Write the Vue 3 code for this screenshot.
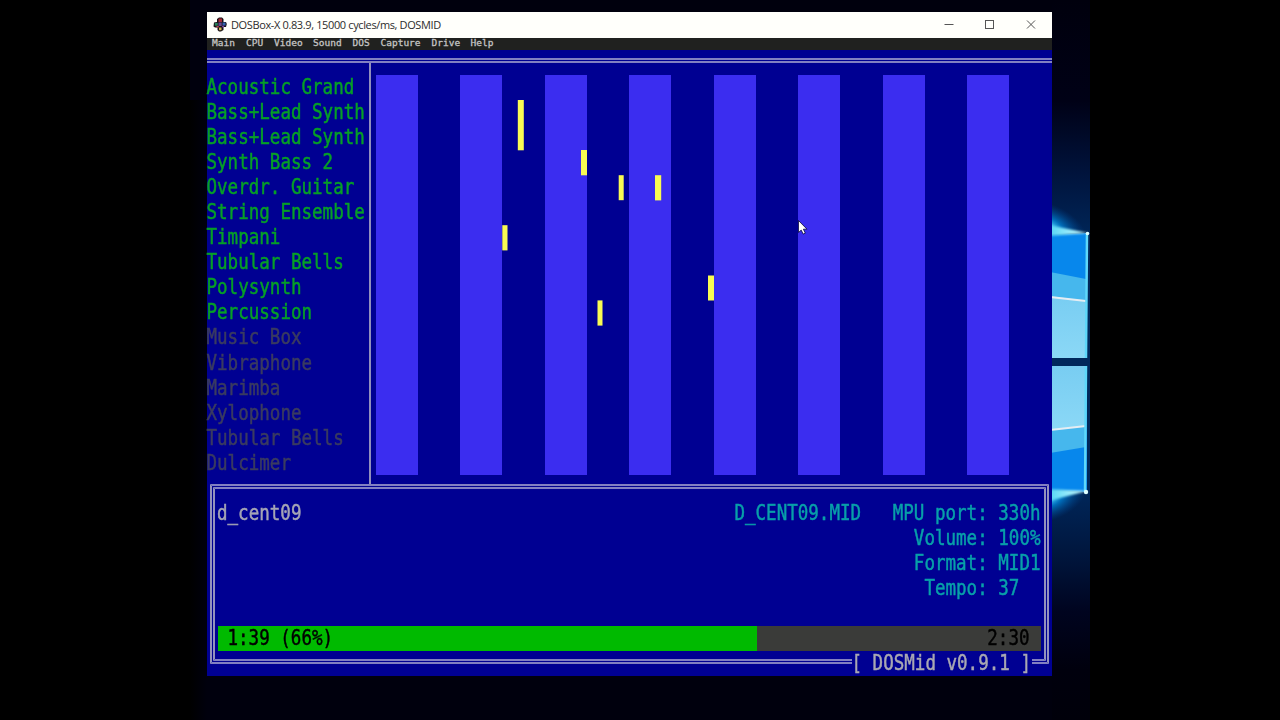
<script setup>
const channels = [
  'Acoustic Grand', 'Bass+Lead Synth', 'Bass+Lead Synth', 'Synth Bass 2',
  'Overdr. Guitar', 'String Ensemble', 'Timpani', 'Tubular Bells',
  'Polysynth', 'Percussion', 'Music Box', 'Vibraphone', 'Marimba',
  'Xylophone', 'Tubular Bells', 'Dulcimer'
]
const activeCount = 10
const menu = [
  { t: 'Main', w: 34 }, { t: 'CPU', w: 28 }, { t: 'Video', w: 39 }, { t: 'Sound', w: 39.5 },
  { t: 'DOS', w: 28 }, { t: 'Capture', w: 51 }, { t: 'Drive', w: 39 }, { t: 'Help', w: 34 }
]
const notes = [
  { x: 517.8, y: 100, w: 6, h: 50.3 },
  { x: 581, y: 150, w: 6, h: 25.3 },
  { x: 618.7, y: 175.2, w: 5, h: 25 },
  { x: 655, y: 175.2, w: 6.2, h: 25.2 },
  { x: 502.3, y: 225.2, w: 5.2, h: 25.2 },
  { x: 708, y: 275.5, w: 6, h: 25 },
  { x: 597.5, y: 300.4, w: 5, h: 25.2 }
]
const info = ['D_CENT09.MID   MPU port: 330h', 'Volume: 100%', 'Format: MID1', 'Tempo: 37  ']
</script>

<template>
  <div class="screen">
    <svg class="wall" width="1280" height="720" viewBox="0 0 1280 720">
      <defs>
        <linearGradient id="glow" x1="0" y1="0" x2="0" y2="1">
          <stop offset="0" stop-color="#00000d" />
          <stop offset="0.14" stop-color="#000116" />
          <stop offset="0.24" stop-color="#00133c" />
          <stop offset="0.32" stop-color="#002455" />
          <stop offset="0.5" stop-color="#00285c" />
          <stop offset="0.69" stop-color="#002557" />
          <stop offset="0.78" stop-color="#00143a" />
          <stop offset="0.85" stop-color="#00041f" />
          <stop offset="0.93" stop-color="#00000d" />
          <stop offset="1" stop-color="#00000a" />
        </linearGradient>
        <linearGradient id="edge"><stop offset="0" stop-color="#000" /><stop offset="1" stop-color="#00000d" /></linearGradient>
        <radialGradient id="flare"><stop offset="0" stop-color="#4fd4ff" /><stop offset="0.35" stop-color="#0086dc" stop-opacity="0.75" /><stop offset="1" stop-color="#004a9c" stop-opacity="0" /></radialGradient>
        <linearGradient id="pane" x1="0" y1="0" x2="0" y2="1"><stop offset="0" stop-color="#78cdf2" /><stop offset="1" stop-color="#8bd8f6" /></linearGradient>
        <linearGradient id="rayfill"><stop offset="0" stop-color="#4fd4f5" /><stop offset="1" stop-color="#d8ffff" /></linearGradient>
        <filter id="soft" x="-20%" y="-60%" width="140%" height="220%"><feGaussianBlur stdDeviation="0.9" /></filter>
        <clipPath id="wallclip"><rect x="190" y="0" width="900" height="720" /></clipPath>
      </defs>
      <rect width="1280" height="720" fill="#000" />
      <g clip-path="url(#wallclip)">
        <rect x="190" width="900" height="720" fill="#00000d" />
        <rect x="190" y="100" width="17" height="620" fill="url(#edge)" />
        <rect x="1052" y="0" width="38" height="720" fill="url(#glow)" />
        <ellipse cx="1050" cy="226" rx="38" ry="21" fill="url(#flare)" transform="rotate(24 1050 226)" />
        <ellipse cx="1050" cy="499" rx="38" ry="21" fill="url(#flare)" transform="rotate(-22 1050 499)" />
        <path d="M1050 235 L1087 233 V358 H1050Z" fill="#0787ec" />
        <path d="M1050 272 L1086 279 V358 H1050Z" fill="#46b7ed" />
        <path d="M1050 296 L1086 301 V358 H1050Z" fill="url(#pane)" />
        <path d="M1050 297 L1086 301" stroke="#e5edf3" stroke-width="2" />
        <path d="M1050 366 H1087 V492 L1050 490Z" fill="#0787ec" />
        <path d="M1050 366 H1086 V447 L1050 453Z" fill="#46b7ed" />
        <path d="M1050 366 H1086 V426 L1050 430Z" fill="url(#pane)" />
        <path d="M1050 430 L1086 426" stroke="#e5edf3" stroke-width="2" />
        <path d="M1087 233 L1086 358 M1086 366 L1085 492" stroke="#5ed7fa" stroke-width="2.5" />
        <path d="M1048 225 L1088 233 L1048 236Z M1048 501 L1087 491 L1048 489Z" fill="url(#rayfill)" filter="url(#soft)" />
        <circle cx="1087.5" cy="233.5" r="1.8" fill="#dfffff" /><circle cx="1086" cy="492" r="2.2" fill="#dfffff" />
      </g>
    </svg>

    <div class="window">
      <header class="titlebar">
        <svg class="logo" width="14" height="16" viewBox="0 0 14 16">
          <path d="M4 2l2-1.500h3L10.500 2v3L13 5l.8 2-.8 3h-2.500v3L8 14.500H6L4.500 13v-2.500H2L.5 9.500 1 5.500 4 5Z" fill="#171117" />
          <path d="M5.500 1.500h3.500V5H5.500Z" fill="#a52b36" /><path d="M1.800 6h3v2.700h-3Z" fill="#278158" />
          <path d="M9.500 5.500h3v3h-3Z" fill="#3260b0" /><path d="M5.500 5.500h3.200v3.500H5.500Z" fill="#66478c" />
          <path d="M3.500 9h2.300v1.500H3.500Z" fill="#b04053" /><path d="M6 10.500h2.500v2.700H6Z" fill="#d5b44a" /><path d="M9 8.800h2v1.500H9Z" fill="#7b3e9d" />
        </svg>
        <span class="title">DOSBox-X 0.83.9, 15000 cycles/ms, DOSMID</span>
        <svg class="controls" width="104" height="26" viewBox="0 0 104 26" fill="none" stroke="#555" stroke-width="1">
          <path d="M.5 12.500h9" /><rect x="41.500" y="8.500" width="8" height="8" /><path d="M83 8.500l8 8m0-8l-8 8" />
        </svg>
      </header>
      <nav class="menubar">
        <span v-for="m in menu" :key="m.t" class="item" :style="{ width: m.w + 'px' }">{{ m.t }}</span>
      </nav>

      <main class="dos">
        <div class="rule"></div>
        <div class="upper">
          <section class="channels">
            <div v-for="(c, i) in channels" :key="i" class="line" :class="{ off: i >= activeCount }"><span class="vga">{{ c }}</span></div>
          </section>
          <section class="roll"><i v-for="n in 8" :key="n" class="stripe"></i></section>
        </div>
        <section class="panel">
          <div class="inner">
            <div class="song line"><span class="vga">d_cent09</span></div>
            <div class="info"><div v-for="r in info" :key="r" class="line"><span class="vga">{{ r }}</span></div></div>
            <div class="progress">
              <div class="done line"><span class="vga">1:39 (66%)</span></div>
              <div class="total line"><span class="vga">2:30</span></div>
            </div>
          </div>
          <div class="version line"><span class="vga">[ DOSMid v0.9.1 ]</span></div>
        </section>
      </main>
    </div>

    <svg class="overlay" width="1280" height="720" viewBox="0 0 1280 720">
      <rect v-for="(n, i) in notes" :key="i" :x="n.x" :y="n.y" :width="n.w" :height="n.h" fill="#f9fb53" />
      <path d="M798.500 220.500v12l2.700-2.400 2 4 2.100-1-1.900-3.900h3.600Z" fill="#fff" stroke="#080838" stroke-width=".8" />
    </svg>
  </div>
</template>

<style>
html, body { margin: 0; background: #000; overflow: hidden; }
</style>

<style scoped>
.screen { position: relative; width: 1280px; height: 720px; overflow: hidden; background: #000; }
.wall, .overlay { position: absolute; left: 0; top: 0; }
.overlay { pointer-events: none; }
.window { position: relative; margin-left: 207px; width: 845px; padding-top: 12px; box-sizing: border-box; }
.titlebar { height: 26px; background: #fffffb; display: flex; align-items: center; }
.logo { margin-left: 6px; }
.title { margin-left: 4px; flex: 1; font: 11px/26px "Open Sans", "Noto Sans", sans-serif; letter-spacing: -0.37px; color: #2c2c2c; white-space: nowrap; }
.controls { flex: none; margin-right: 4px; }
.menubar { height: 12px; background: #20211f; display: flex; padding-left: 5px; box-sizing: border-box; }
.item { flex: none; font: 9.5px/10px "DejaVu Sans Mono", monospace; color: #c4c4c4; white-space: nowrap; -webkit-text-stroke: .3px #c4c4c4; }
.dos { height: 626px; background: #000092; display: flex; flex-direction: column; }
.rule { height: 5px; margin-top: 8px; box-sizing: border-box; border: 0 double #8280c2; border-top-width: 5px; }
.upper { height: 421px; display: flex; }
.channels { width: 162px; padding-top: 12px; box-sizing: content-box; border-right: 2px solid #918fbd; height: 409px; color: #06a026; }
.line { height: 25.05px; line-height: 25.05px; white-space: pre; }
.vga { display: inline-block; margin-left: -.5px; font: 17.54px/25.05px "DejaVu Sans Mono", monospace; transform: scaleY(1.2); transform-origin: 50% 50%; white-space: pre; -webkit-text-stroke: .4px currentColor; }
.off { color: #3a3b60; }
.roll { margin: 12px 0 9px 5px; display: flex; gap: 42.49px; }
.stripe { width: 42px; background: #3b2df0; }
.panel { margin: 0 3px 0 3px; height: 180px; box-sizing: border-box; border: 5px double #8280c2; border-left-color: #9391bd; border-right-color: #9391bd; }
.inner { height: 170px; padding: 12px 3px 0 3px; box-sizing: border-box; display: grid; grid-template-columns: 200px 1fr; grid-template-rows: 125px 25px; color: #a5a5b5; }
.song .vga { margin-left: -1px; }
.info { text-align: right; color: #08a0a9; }
.info .vga { margin-right: .5px; }
.progress { grid-column: 1 / 3; display: flex; justify-content: space-between; height: 25px; background: #3a3b39; color: #000; }
.done { width: 539px; background: #00ba00; }
.done .vga { margin-left: 9.5px; }
.total { margin-right: 11.5px; }
.version { position: relative; width: 180px; height: 24px; margin: -8px 12px 0 auto; background: #000092; color: #a9a8b2; }
</style>
